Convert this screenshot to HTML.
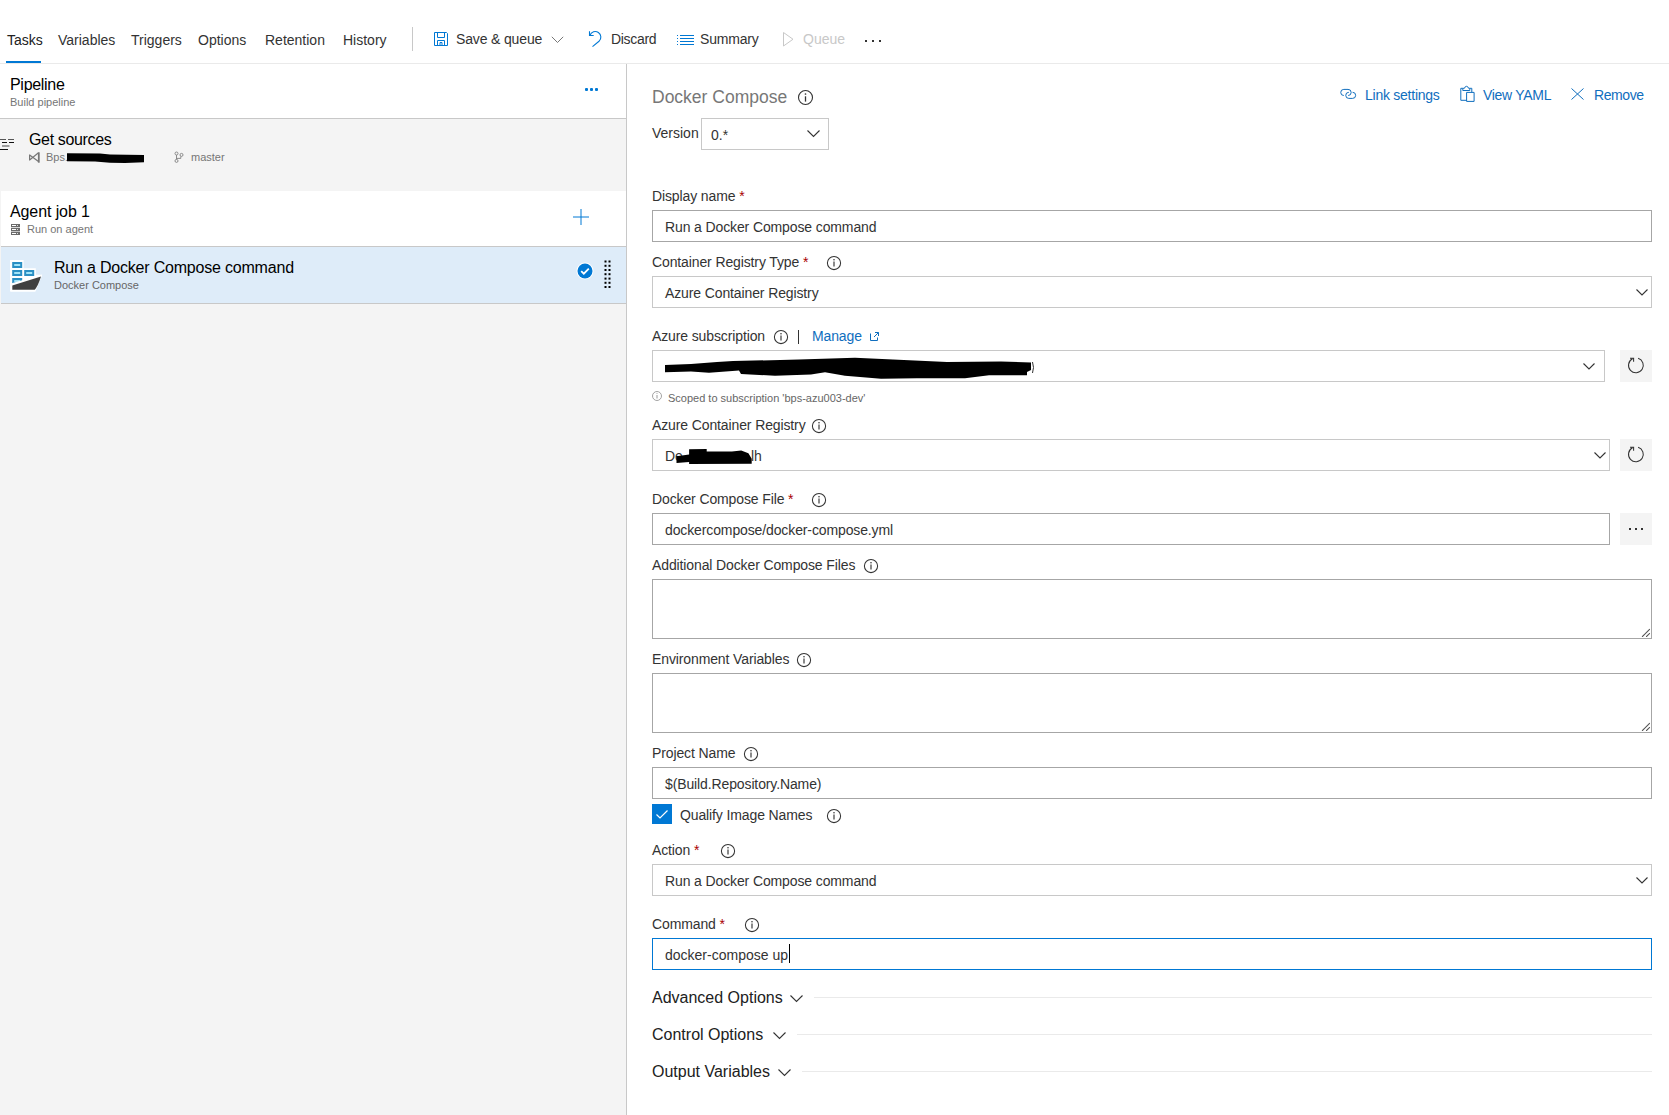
<!DOCTYPE html>
<html><head><meta charset="utf-8">
<style>
*{box-sizing:border-box;margin:0;padding:0}
html,body{width:1669px;height:1115px;overflow:hidden;background:#fff}
body{position:relative;font-family:"Liberation Sans",sans-serif;color:#333;font-size:14px;line-height:20px}
.a{position:absolute;white-space:nowrap}
.t{position:absolute;white-space:nowrap;line-height:20px}
.g{color:#666}
.lnk{color:#106ebe}
.box{position:absolute;border:1px solid #a6a6a6;background:#fff}
.sel{position:absolute;border:1px solid #c8c8c8;background:#fff}
.req{color:#a80000}
svg{position:absolute;overflow:visible}
</style></head><body>

<!-- ===== TOP TOOLBAR ===== -->
<div class="a" style="left:0;top:63px;width:1669px;height:1px;background:#eaeaea"></div>
<div class="t" style="left:7px;top:30px;color:#212121">Tasks</div>
<div class="a" style="left:6px;top:61px;width:35px;height:2px;background:#0078d4"></div>
<div class="t" style="left:58px;top:30px">Variables</div>
<div class="t" style="left:131px;top:30px">Triggers</div>
<div class="t" style="left:198px;top:30px">Options</div>
<div class="t" style="left:265px;top:30px">Retention</div>
<div class="t" style="left:343px;top:30px">History</div>
<div class="a" style="left:412px;top:27px;width:1px;height:24px;background:#c8c8c8"></div>

<!-- Save icon -->
<svg style="left:433px;top:31px" width="16" height="16" viewBox="0 0 16 16"><path d="M1.5 1.5h12l1 1v12h-13z M4.5 1.5v5h7v-5 M4.5 14.5v-5h7v5 M7 14.5v-3h2v3" fill="none" stroke="#0078d4" stroke-width="1"/></svg>
<div class="t" style="left:456px;top:29px;letter-spacing:-0.15px">Save &amp; queue</div>
<svg style="left:551px;top:35.5px" width="13" height="8" viewBox="0 0 13 8"><path d="M0.8 0.8l5.7 5.7 5.7-5.7" fill="none" stroke="#777" stroke-width="1"/></svg>
<!-- Discard icon -->
<svg style="left:584px;top:28px" width="22" height="22" viewBox="0 0 22 22"><path d="M5.5 3.2V7.5H9.7 M6 7.2A5.6 5.6 0 1 1 15 13.3L8.5 18.6" fill="none" stroke="#0078d4" stroke-width="1.1"/></svg>
<div class="t" style="left:611px;top:29px;letter-spacing:-0.3px">Discard</div>
<!-- Summary icon -->
<svg style="left:677px;top:35px" width="17" height="12" viewBox="0 0 17 12"><path d="M0 0.5h1 M3 0.5h14 M0 3.5h1 M3 3.5h14 M0 6.5h1 M3 6.5h14 M0 9.5h1 M3 9.5h14" fill="none" stroke="#0078d4" stroke-width="1"/></svg>
<div class="t" style="left:700px;top:29px;letter-spacing:-0.2px">Summary</div>
<svg style="left:783px;top:32px" width="11" height="15" viewBox="0 0 11 15"><path d="M0.5 0.5v13.5l9.5-6.75z" fill="none" stroke="#c8c8c8" stroke-width="1"/></svg>
<div class="t" style="left:803px;top:29px;color:#c8c8c8">Queue</div>
<div class="a" style="left:865px;top:40px;width:2px;height:2px;background:#333"></div>
<div class="a" style="left:872px;top:40px;width:2px;height:2px;background:#333"></div>
<div class="a" style="left:879px;top:40px;width:2px;height:2px;background:#333"></div>

<!-- ===== LEFT PANEL ===== -->
<div class="a" style="left:0;top:64px;width:626px;height:1051px;background:#f4f4f4"></div>
<div class="a" style="left:626px;top:64px;width:1px;height:1051px;background:#c8c8c8"></div>
<!-- Pipeline header -->
<div class="a" style="left:0;top:64px;width:626px;height:54px;background:#fff"></div>
<div class="a" style="left:0;top:118px;width:626px;height:1px;background:#c8c8c8"></div>
<div class="t" style="left:10px;top:75px;font-size:16px;letter-spacing:-0.3px;color:#000">Pipeline</div>
<div class="t" style="left:10px;top:92px;font-size:11px;color:#767676">Build pipeline</div>
<div class="a" style="left:585px;top:88px;width:3px;height:3px;background:#0078d4;border-radius:1px"></div>
<div class="a" style="left:590px;top:88px;width:3px;height:3px;background:#0078d4;border-radius:1px"></div>
<div class="a" style="left:595px;top:88px;width:3px;height:3px;background:#0078d4;border-radius:1px"></div>

<!-- Get sources -->
<svg style="left:0;top:132px" width="16" height="20" viewBox="0 0 16 20"><path d="M0 7.5h6 M8 7.5h6" stroke="#555" stroke-width="1"/><path d="M2 10.5h5 M9 10.5h5 M0 17.5h8" stroke="#111" stroke-width="1"/><path d="M2 14h7.5" stroke="#888" stroke-width="1.6"/></svg>
<div class="t" style="left:29px;top:130px;font-size:16px;letter-spacing:-0.35px;color:#000">Get sources</div>
<svg style="left:29px;top:152px" width="11" height="11" viewBox="0 0 11 11"><path d="M0.6 2.5V8.5 M0.6 3L9.5 9.6 M0.6 8L9.5 0.8" fill="none" stroke="#777" stroke-width="1.2"/><path d="M9.8 0.3V10.7" stroke="#777" stroke-width="1.8"/></svg>
<div class="t" style="left:46px;top:147px;font-size:11px;color:#767676">Bps.</div>
<svg style="left:64px;top:150px" width="82" height="14" viewBox="0 0 82 14"><path d="M3 3.3 L36 3.5 L46 4.5 L80 5 L80 12.3 L61 13 L46 12.8 L31 11.5 L3 11.2 Z" fill="#000"/></svg>
<svg style="left:170px;top:148px" width="20" height="18" viewBox="0 0 20 18"><g fill="none" stroke="#808080" stroke-width="0.9"><circle cx="6.5" cy="5.5" r="1.5"/><circle cx="11.5" cy="6.9" r="1.5"/><circle cx="6.5" cy="12.9" r="1.5"/><path d="M6.5 7v4.4 M6.5 10.4H10.8V8.4"/></g></svg>
<div class="t" style="left:191px;top:147px;font-size:11px;color:#767676">master</div>

<!-- Agent job -->
<div class="a" style="left:1px;top:191px;width:625px;height:55px;background:#fff"></div>
<div class="t" style="left:10px;top:202px;font-size:16px;letter-spacing:-0.1px;color:#000">Agent job 1</div>
<svg style="left:11px;top:224px" width="9" height="11" viewBox="0 0 9 11"><g fill="#6a6a6a"><rect x="0" y="0" width="9" height="3"/><rect x="0" y="4" width="9" height="3"/><rect x="0" y="8" width="9" height="3"/></g><rect x="0" y="3" width="9" height="1" fill="#d8d8d8"/><rect x="0" y="7" width="9" height="1" fill="#c4c4c4"/><g fill="#fff"><rect x="1" y="1" width="4" height="1"/><rect x="1" y="5" width="4" height="1"/><rect x="1" y="9" width="4" height="1"/></g><g fill="#ddd"><rect x="6" y="1" width="1" height="1"/><rect x="6" y="5" width="1" height="1"/><rect x="6" y="9" width="1" height="1"/></g></svg>
<div class="t" style="left:27px;top:219px;font-size:11px;color:#767676">Run on agent</div>
<svg style="left:573px;top:209px" width="16" height="16" viewBox="0 0 16 16"><path d="M0 8h16 M8 0v16" fill="none" stroke="#0078d4" stroke-width="1"/></svg>

<!-- Selected task -->
<div class="a" style="left:1px;top:246px;width:625px;height:1px;background:#c8c8c8"></div>
<div class="a" style="left:1px;top:247px;width:625px;height:56px;background:#deecf9"></div>
<div class="a" style="left:1px;top:303px;width:625px;height:1px;background:#c8c8c8"></div>
<svg style="left:10px;top:260px" width="33" height="33" viewBox="0 0 33 33">
<path d="M0 0H13.6V8.2H25.8V14.7H32.2L25.3 31.6H0Z" fill="#fff"/>
<rect x="2.2" y="2" width="10" height="6" fill="#2a8fc4"/><rect x="4.2" y="4" width="6" height="2" fill="#a3e4f7"/>
<rect x="2.2" y="10" width="10" height="6" fill="#2a8fc4"/><rect x="4.2" y="12" width="6" height="2" fill="#a3e4f7"/>
<rect x="14.2" y="10" width="10" height="6" fill="#2a8fc4"/><rect x="16.2" y="12" width="6" height="2" fill="#a3e4f7"/>
<rect x="2.2" y="18" width="10" height="6" fill="#2a8fc4"/><rect x="4.2" y="20" width="6" height="2" fill="#a3e4f7"/>
<path d="M0.8 23.6L32.2 14.5L25.3 31.6H0.8Z" fill="#fff"/>
<path d="M2.3 25.4L31 16.4Q28 26 24.7 29.7H2.3Z" fill="#404040"/>
</svg>
<div class="t" style="left:54px;top:258px;font-size:16px;letter-spacing:-0.2px;color:#000">Run a Docker Compose command</div>
<div class="t" style="left:54px;top:275px;font-size:11px;color:#666">Docker Compose</div>
<svg style="left:576px;top:262px" width="18" height="18" viewBox="0 0 18 18"><circle cx="9" cy="9" r="8.5" fill="#fff"/><circle cx="9" cy="9" r="7.5" fill="#0078d4"/><path d="M5.2 9.2l2.6 2.5 5-5" fill="none" stroke="#fff" stroke-width="1.8"/></svg>
<svg style="left:604px;top:260px" width="8" height="30" viewBox="0 0 8 30">
<g fill="#000"><rect x="0.5" y="0.5" width="2" height="2"/><rect x="4.5" y="0.5" width="2" height="2"/>
<rect x="0.5" y="4.8" width="2" height="2"/><rect x="4.5" y="4.8" width="2" height="2"/>
<rect x="0.5" y="9" width="2" height="2"/><rect x="4.5" y="9" width="2" height="2"/>
<rect x="0.5" y="13.2" width="2" height="2"/><rect x="4.5" y="13.2" width="2" height="2"/>
<rect x="0.5" y="17.6" width="2" height="2"/><rect x="4.5" y="17.6" width="2" height="2"/>
<rect x="0.5" y="21.8" width="2" height="2"/><rect x="4.5" y="21.8" width="2" height="2"/>
<rect x="0.5" y="26" width="2" height="2"/><rect x="4.5" y="26" width="2" height="2"/></g></svg>

<!-- ===== RIGHT PANEL ===== -->
<div class="t" style="left:652px;top:87px;font-size:17.5px;line-height:20px;color:#777">Docker Compose</div>


<svg style="left:798px;top:89.5px" width="16" height="16" viewBox="0 0 16 16"><circle cx="7.5" cy="7.5" r="7" fill="none" stroke="#333" stroke-width="1.1"/><path d="M7.5 6.3v5.3" stroke="#333" stroke-width="1.3"/><circle cx="7.5" cy="4" r="0.85" fill="#333"/></svg>
<svg style="left:1336px;top:84px" width="24" height="20" viewBox="0 0 24 20"><path d="M7.8 11.5A3.05 3.05 0 0 1 7.8 5.4H12A3.05 3.05 0 0 1 12.2 11.5 M12.8 8.3A3.05 3.05 0 0 0 12.8 14.4H16.6A3.05 3.05 0 0 0 16.6 8.3" fill="none" stroke="#106ebe" stroke-width="1"/></svg>
<div class="t lnk" style="left:1365px;top:84.5px;letter-spacing:-0.25px">Link settings</div>
<svg style="left:1456px;top:84px" width="24" height="20" viewBox="0 0 24 20"><path d="M10.6 16.3H4.8V4.3H8.4Q9 2.3 10.5 2.3Q12 2.3 12.6 4.3H15.8V8.4 M6.8 4.6V6.5H13.8V4.6 M10.6 8.4H18.1V17.4H10.6Z" fill="none" stroke="#106ebe" stroke-width="1"/></svg>
<div class="t lnk" style="left:1483px;top:84.5px;letter-spacing:-0.3px">View YAML</div>
<svg style="left:1571px;top:88px" width="13" height="12" viewBox="0 0 13 12"><path d="M0.5 0.5l12 11 M12.5 0.5l-12 11" fill="none" stroke="#106ebe" stroke-width="1"/></svg>
<div class="t lnk" style="left:1594px;top:84.5px;letter-spacing:-0.4px">Remove</div>
<div class="t" style="left:652px;top:123px">Version</div>
<div class="sel" style="left:701px;top:118px;width:128px;height:32px"></div>
<div class="t" style="left:711px;top:125px">0.*</div>
<svg style="left:807px;top:130px" width="13" height="8" viewBox="0 0 13 8"><path d="M0.5 0.5l6 6 6-6" fill="none" stroke="#333" stroke-width="1.1"/></svg>
<!--FORM-->
<div class="t" style="left:652px;top:186px;letter-spacing:-0.12px">Display name <span class="req">*</span></div>
<div class="box" style="left:652px;top:210px;width:1000px;height:32px"></div>
<div class="t" style="left:665px;top:217px;letter-spacing:-0.12px">Run a Docker Compose command</div>
<div class="t" style="left:652px;top:252px;letter-spacing:-0.12px">Container Registry Type <span class="req">*</span></div>
<svg style="left:826px;top:254.5px" width="16" height="16" viewBox="0 0 16 16"><circle cx="8" cy="8" r="6.6" fill="none" stroke="#333" stroke-width="1.05"/><path d="M8 6.6v4.9" stroke="#333" stroke-width="1.15"/><circle cx="8" cy="4.7" r="0.8" fill="#333"/></svg>
<div class="sel" style="left:652px;top:276px;width:1000px;height:32px"></div>
<div class="t" style="left:665px;top:283px;letter-spacing:-0.12px">Azure Container Registry</div>
<svg style="left:1636.0px;top:289.0px" width="12" height="7.0" viewBox="0 0 12 7.0"><path d="M0.5 0.5L6.0 6.0L11.5 0.5" fill="none" stroke="#333" stroke-width="1.1"/></svg>
<div class="t" style="left:652px;top:326px;letter-spacing:-0.12px">Azure subscription</div>
<svg style="left:773px;top:328.5px" width="16" height="16" viewBox="0 0 16 16"><circle cx="8" cy="8" r="6.6" fill="none" stroke="#333" stroke-width="1.05"/><path d="M8 6.6v4.9" stroke="#333" stroke-width="1.15"/><circle cx="8" cy="4.7" r="0.8" fill="#333"/></svg>
<div class="a" style="left:798px;top:330px;width:1px;height:14px;background:#333"></div>
<div class="t lnk" style="left:812px;top:326px;letter-spacing:-0.12px">Manage</div>
<svg style="left:870px;top:332px" width="9" height="9" viewBox="0 0 9 9"><path d="M0.5 1.5v7h7V5.5 M4 5l4.5-4.5 M5 0.5h3.5v3.5" fill="none" stroke="#106ebe" stroke-width="1"/></svg>
<div class="sel" style="left:652px;top:350px;width:953px;height:32px"></div>
<svg style="left:1583.0px;top:363.0px" width="12" height="7.0" viewBox="0 0 12 7.0"><path d="M0.5 0.5L6.0 6.0L11.5 0.5" fill="none" stroke="#333" stroke-width="1.1"/></svg>
<svg style="left:655px;top:350px" width="390" height="32" viewBox="0 0 390 32"><path d="M10 15 L36 14 L62 12 L78 11 L143.8 9.6 L200 7.8 L238 9.6 L292 12 L346 11.4 L376 12.6 L376 20 L372 22 L372 25.2 L334 25.2 L310 28.2 L262 28.2 L226 28.8 L190 25.8 L170 22.2 L156 24.6 L120 25.8 L86 24 L84 20.4 L54 22.8 L36 21.6 L10 22.2 Z" fill="#000"/><path d="M377.5 12q2 5.5 0 11" fill="none" stroke="#333" stroke-width="1"/></svg>
<div class="a" style="left:1620px;top:350px;width:32px;height:32px;background:#f4f4f4"></div>
<svg style="left:1622px;top:353px" width="28" height="28" viewBox="0 0 28 28"><path d="M16.1 5.3A7.4 7.4 0 1 1 10.5 5.8 M8 5.3H11.6V8.7" fill="none" stroke="#333" stroke-width="1.05"/></svg>
<svg style="left:652px;top:391px" width="10" height="10" viewBox="0 0 10 10"><circle cx="5" cy="5" r="4.5" fill="none" stroke="#999" stroke-width="0.9"/><path d="M5 4v3.5" stroke="#999" stroke-width="1"/><circle cx="5" cy="2.6" r="0.5" fill="#999"/></svg>
<div class="t" style="left:668px;top:388px;font-size:11px;color:#666">Scoped to subscription 'bps-azu003-dev'</div>
<div class="t" style="left:652px;top:415px;letter-spacing:-0.12px">Azure Container Registry</div>
<svg style="left:811px;top:417.5px" width="16" height="16" viewBox="0 0 16 16"><circle cx="8" cy="8" r="6.6" fill="none" stroke="#333" stroke-width="1.05"/><path d="M8 6.6v4.9" stroke="#333" stroke-width="1.15"/><circle cx="8" cy="4.7" r="0.8" fill="#333"/></svg>
<div class="sel" style="left:652px;top:439px;width:958px;height:32px"></div>
<svg style="left:1594.0px;top:452.0px" width="12" height="7.0" viewBox="0 0 12 7.0"><path d="M0.5 0.5L6.0 6.0L11.5 0.5" fill="none" stroke="#333" stroke-width="1.1"/></svg>
<div class="t" style="left:665px;top:446px;letter-spacing:-0.12px">De</div>
<div class="t" style="left:751px;top:446px;letter-spacing:-0.12px">lh</div>
<svg style="left:660px;top:440px" width="100" height="30" viewBox="0 0 100 30"><path d="M16.5 16.2 L29.1 14.4 L29.1 9.3 L46.7 9 L46.7 11.5 L71.9 11.5 L81.2 10.4 L88.4 13.3 L91.7 18.7 L91.7 23.7 L29.1 24.1 L29.1 21.9 L16.5 23 Z" fill="#000"/></svg>
<div class="a" style="left:1620px;top:439px;width:32px;height:32px;background:#f4f4f4"></div>
<svg style="left:1622px;top:442px" width="28" height="28" viewBox="0 0 28 28"><path d="M16.1 5.3A7.4 7.4 0 1 1 10.5 5.8 M8 5.3H11.6V8.7" fill="none" stroke="#333" stroke-width="1.05"/></svg>
<div class="t" style="left:652px;top:489px;letter-spacing:-0.12px">Docker Compose File <span class="req">*</span></div>
<svg style="left:811px;top:491.5px" width="16" height="16" viewBox="0 0 16 16"><circle cx="8" cy="8" r="6.6" fill="none" stroke="#333" stroke-width="1.05"/><path d="M8 6.6v4.9" stroke="#333" stroke-width="1.15"/><circle cx="8" cy="4.7" r="0.8" fill="#333"/></svg>
<div class="box" style="left:652px;top:513px;width:958px;height:32px"></div>
<div class="t" style="left:665px;top:520px;letter-spacing:-0.12px">dockercompose/docker-compose.yml</div>
<div class="a" style="left:1620px;top:513px;width:32px;height:32px;background:#f4f4f4"></div>
<div class="a" style="left:1629px;top:528px;width:2px;height:2px;background:#333"></div>
<div class="a" style="left:1635px;top:528px;width:2px;height:2px;background:#333"></div>
<div class="a" style="left:1641px;top:528px;width:2px;height:2px;background:#333"></div>
<div class="t" style="left:652px;top:555px;letter-spacing:-0.12px">Additional Docker Compose Files</div>
<svg style="left:863px;top:557.5px" width="16" height="16" viewBox="0 0 16 16"><circle cx="8" cy="8" r="6.6" fill="none" stroke="#333" stroke-width="1.05"/><path d="M8 6.6v4.9" stroke="#333" stroke-width="1.15"/><circle cx="8" cy="4.7" r="0.8" fill="#333"/></svg>
<div class="box" style="left:652px;top:579px;width:1000px;height:60px"></div>
<svg style="left:1640px;top:627px" width="12" height="12" viewBox="0 0 12 12"><path d="M2.4 9.5L9.5 2.4 M6.5 9.5L9.5 6.5" stroke="#555" stroke-width="1.1" stroke-linecap="round" stroke-dasharray="0.9 0.5"/></svg>
<div class="t" style="left:652px;top:649px;letter-spacing:-0.12px">Environment Variables</div>
<svg style="left:795.5px;top:651.5px" width="16" height="16" viewBox="0 0 16 16"><circle cx="8" cy="8" r="6.6" fill="none" stroke="#333" stroke-width="1.05"/><path d="M8 6.6v4.9" stroke="#333" stroke-width="1.15"/><circle cx="8" cy="4.7" r="0.8" fill="#333"/></svg>
<div class="box" style="left:652px;top:673px;width:1000px;height:60px"></div>
<svg style="left:1640px;top:721px" width="12" height="12" viewBox="0 0 12 12"><path d="M2.4 9.5L9.5 2.4 M6.5 9.5L9.5 6.5" stroke="#555" stroke-width="1.1" stroke-linecap="round" stroke-dasharray="0.9 0.5"/></svg>
<div class="t" style="left:652px;top:743px;letter-spacing:-0.12px">Project Name</div>
<svg style="left:742.5px;top:745.5px" width="16" height="16" viewBox="0 0 16 16"><circle cx="8" cy="8" r="6.6" fill="none" stroke="#333" stroke-width="1.05"/><path d="M8 6.6v4.9" stroke="#333" stroke-width="1.15"/><circle cx="8" cy="4.7" r="0.8" fill="#333"/></svg>
<div class="box" style="left:652px;top:767px;width:1000px;height:32px"></div>
<div class="t" style="left:665px;top:774px;letter-spacing:-0.12px">$(Build.Repository.Name)</div>
<div class="a" style="left:652px;top:804px;width:20px;height:20px;background:#0078d4"></div>
<svg style="left:652px;top:804px" width="20" height="20" viewBox="0 0 20 20"><path d="M4.5 10.5l3.5 3.5 7.5-7.5" fill="none" stroke="#fff" stroke-width="1.2"/></svg>
<div class="t" style="left:680px;top:805px;letter-spacing:-0.12px">Qualify Image Names</div>
<svg style="left:826px;top:807.5px" width="16" height="16" viewBox="0 0 16 16"><circle cx="8" cy="8" r="6.6" fill="none" stroke="#333" stroke-width="1.05"/><path d="M8 6.6v4.9" stroke="#333" stroke-width="1.15"/><circle cx="8" cy="4.7" r="0.8" fill="#333"/></svg>
<div class="t" style="left:652px;top:840px;letter-spacing:-0.12px">Action <span class="req">*</span></div>
<svg style="left:720px;top:842.5px" width="16" height="16" viewBox="0 0 16 16"><circle cx="8" cy="8" r="6.6" fill="none" stroke="#333" stroke-width="1.05"/><path d="M8 6.6v4.9" stroke="#333" stroke-width="1.15"/><circle cx="8" cy="4.7" r="0.8" fill="#333"/></svg>
<div class="sel" style="left:652px;top:864px;width:1000px;height:32px"></div>
<div class="t" style="left:665px;top:871px;letter-spacing:-0.12px">Run a Docker Compose command</div>
<svg style="left:1636.0px;top:877.0px" width="12" height="7.0" viewBox="0 0 12 7.0"><path d="M0.5 0.5L6.0 6.0L11.5 0.5" fill="none" stroke="#333" stroke-width="1.1"/></svg>
<div class="t" style="left:652px;top:914px;letter-spacing:-0.12px">Command <span class="req">*</span></div>
<svg style="left:744px;top:916.5px" width="16" height="16" viewBox="0 0 16 16"><circle cx="8" cy="8" r="6.6" fill="none" stroke="#333" stroke-width="1.05"/><path d="M8 6.6v4.9" stroke="#333" stroke-width="1.15"/><circle cx="8" cy="4.7" r="0.8" fill="#333"/></svg>
<div class="box" style="left:652px;top:938px;width:1000px;height:32px;border-color:#0078d4"></div>
<div class="t" style="left:665px;top:945px">docker-compose up</div>
<div class="a" style="left:789px;top:944px;width:1px;height:19px;background:#000"></div>
<div class="t" style="left:652px;top:988px;font-size:16px;color:#212121">Advanced Options</div>
<svg style="left:789.5px;top:994.75px" width="13" height="7.5" viewBox="0 0 13 7.5"><path d="M0.5 0.5L6.5 6.5L12.5 0.5" fill="none" stroke="#333" stroke-width="1.1"/></svg>
<div class="a" style="left:814px;top:997px;width:838px;height:1px;background:#eaeaea"></div>
<div class="t" style="left:652px;top:1025px;font-size:16px;color:#212121">Control Options</div>
<svg style="left:772.5px;top:1031.75px" width="13" height="7.5" viewBox="0 0 13 7.5"><path d="M0.5 0.5L6.5 6.5L12.5 0.5" fill="none" stroke="#333" stroke-width="1.1"/></svg>
<div class="a" style="left:797px;top:1034px;width:855px;height:1px;background:#eaeaea"></div>
<div class="t" style="left:652px;top:1062px;font-size:16px;color:#212121">Output Variables</div>
<svg style="left:777.5px;top:1068.75px" width="13" height="7.5" viewBox="0 0 13 7.5"><path d="M0.5 0.5L6.5 6.5L12.5 0.5" fill="none" stroke="#333" stroke-width="1.1"/></svg>
<div class="a" style="left:802px;top:1071px;width:850px;height:1px;background:#eaeaea"></div>
<!--/FORM-->
</body></html>
